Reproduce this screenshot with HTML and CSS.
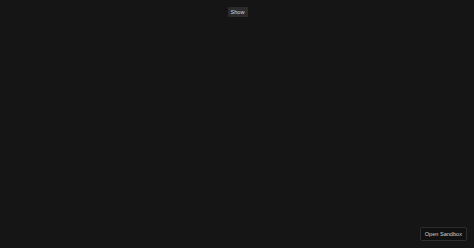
FILE: index.html
```html
<!DOCTYPE html>
<html>
<head>
<meta charset="utf-8">
<link rel="stylesheet" href="styles.css">
</head>
<body>
<div class="page">
  <div class="top">
    <button class="show">Show</button>
  </div>
  <div class="bottom">
    <button class="sandbox">Open Sandbox</button>
  </div>
</div>
</body>
</html>
```
FILE: styles.css
```css
html, body {
  margin: 0;
  padding: 0;
  background: #151515;
  height: 100%;
}
.page {
  height: 248px;
  display: flex;
  flex-direction: column;
  justify-content: space-between;
  font-family: "Liberation Sans", Arial, sans-serif;
}
.top {
  display: flex;
  justify-content: center;
  padding-top: 7px;
  padding-left: 1px;
}
.show {
  font-family: inherit;
  font-size: 5.6px;
  color: #d8d8d8;
  background: #2b2b2b;
  border: none;
  border-radius: 1px;
  padding: 2px 3px;
  line-height: 6px;
  margin: 0;
}
.bottom {
  display: flex;
  justify-content: flex-end;
  padding: 0 7px 7px 0;
}
.sandbox {
  font-family: inherit;
  font-size: 5.6px;
  color: #d0d0d0;
  background: #101010;
  border: 1px solid #2e2e2e;
  border-radius: 2px;
  padding: 3px 4px;
  line-height: 6px;
  margin: 0;
}
```
